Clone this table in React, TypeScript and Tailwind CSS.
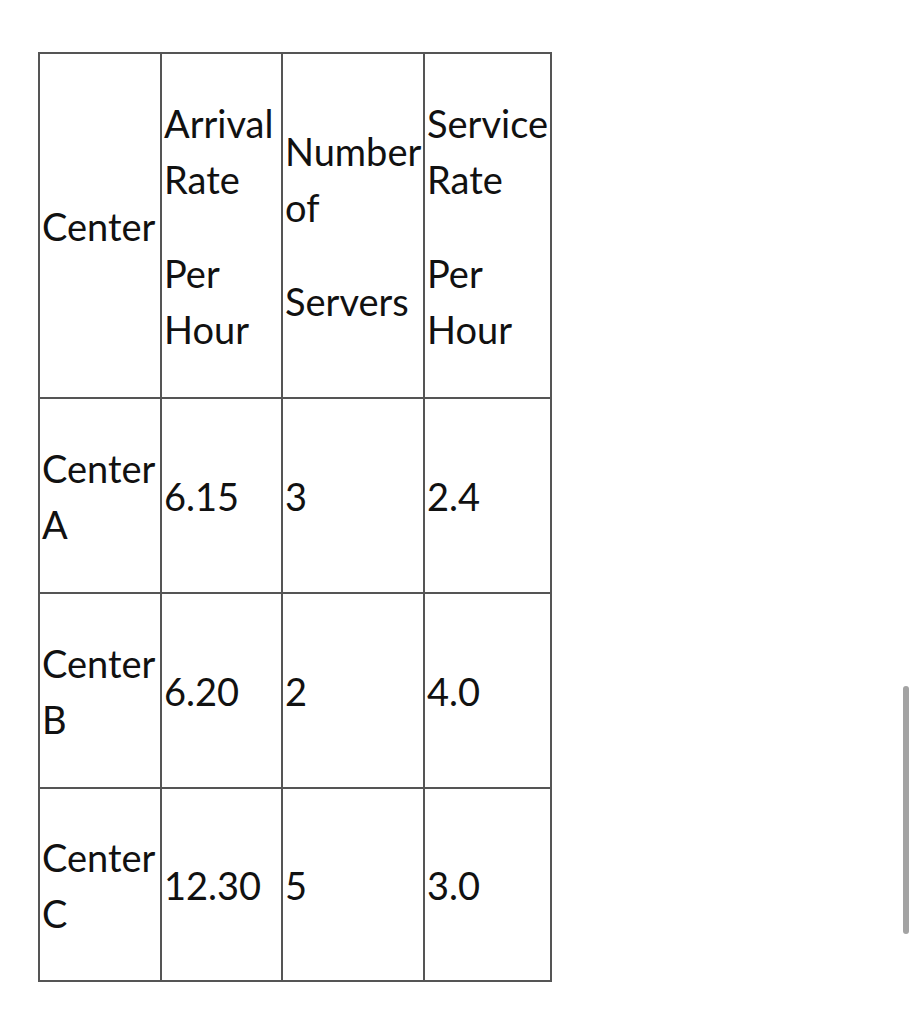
import React from 'react';

const rows = [
  { name: ['Center', 'A'], arrival: '6.15', servers: '3', service: '2.4', h: 'h-[195px]' },
  { name: ['Center', 'B'], arrival: '6.20', servers: '2', service: '4.0', h: 'h-[195px]' },
  { name: ['Center', 'C'], arrival: '12.30', servers: '5', service: '3.0', h: 'h-[193px]' },
];

function Lines({ lines }: { lines: string[] }) {
  return (
    <div className="flex flex-col">
      {lines.map((l) => (
        <span key={l} className="block whitespace-nowrap">
          {l}
        </span>
      ))}
    </div>
  );
}

const cell = 'border-2 border-[#555] align-middle pl-[2px] pr-0 py-0';

export default function App() {
  return (
    <div
      className="relative min-h-[1024px] w-full bg-white text-[#111] text-[38px] leading-[56px]"
      style={{ fontFamily: 'Lato, "Liberation Sans", sans-serif' }}
    >
      <div className="pl-[38px] pt-[52px]">
        <table className="table-fixed border-collapse w-[512px]">
          <colgroup>
            <col className="w-[122px]" />
            <col className="w-[121px]" />
            <col className="w-[142px]" />
            <col className="w-[127px]" />
          </colgroup>
          <tbody>
            <tr className="h-[345px]">
              <td className={cell}>
                <Lines lines={['Center']} />
              </td>
              <td className={cell}>
                <div className="flex flex-col gap-[38px]">
                  <Lines lines={['Arrival', 'Rate']} />
                  <Lines lines={['Per', 'Hour']} />
                </div>
              </td>
              <td className={cell}>
                <div className="flex flex-col gap-[38px]">
                  <Lines lines={['Number', 'of']} />
                  <Lines lines={['Servers']} />
                </div>
              </td>
              <td className={cell}>
                <div className="flex flex-col gap-[38px]">
                  <Lines lines={['Service', 'Rate']} />
                  <Lines lines={['Per', 'Hour']} />
                </div>
              </td>
            </tr>
            {rows.map((r) => (
              <tr key={r.name[1]} className={r.h}>
                <td className={cell}>
                  <Lines lines={r.name} />
                </td>
                <td className={cell}>{r.arrival}</td>
                <td className={cell}>{r.servers}</td>
                <td className={cell}>{r.service}</td>
              </tr>
            ))}
          </tbody>
        </table>
      </div>

      {/* scroll indicator */}
      <div className="absolute left-[903px] top-[686px] h-[248px] w-[6px] rounded-full bg-[#a3a3a3]" />
    </div>
  );
}
